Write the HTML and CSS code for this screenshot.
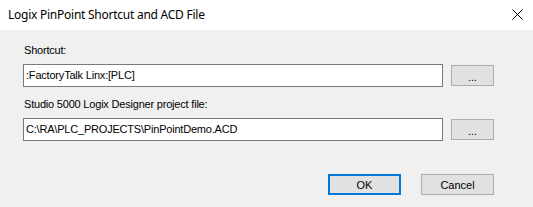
FILE: index.html
```html
<!DOCTYPE html>
<html>
<head>
<meta charset="utf-8">
<link rel="stylesheet" href="styles.css">
</head>
<body>
<div class="dialog">
  <div class="titlebar">
    <span class="title">Logix PinPoint Shortcut and ACD File</span>
    <svg class="close" width="11" height="11" viewBox="0 0 11 11"><path d="M0.5 0.5 L10.5 10.5 M10.5 0.5 L0.5 10.5" stroke="#000" stroke-width="1" fill="none"/></svg>
  </div>
  <div class="content">
    <div class="label first">Shortcut:</div>
    <div class="row">
      <input class="field" type="text" value=":FactoryTalk Linx:[PLC]">
      <button class="btn browse">...</button>
    </div>
    <div class="label second">Studio 5000 Logix Designer project file:</div>
    <div class="row">
      <input class="field" type="text" value="C:\RA\PLC_PROJECTS\PinPointDemo.ACD">
      <button class="btn browse">...</button>
    </div>
    <div class="footer">
      <button class="btn action default">OK</button>
      <button class="btn action">Cancel</button>
    </div>
  </div>
</div>
</body>
</html>
```
FILE: styles.css
```css
html, body {
  margin: 0;
  padding: 0;
  background: #f0f0f0;
}
.dialog {
  width: 533px;
  height: 207px;
  display: flex;
  flex-direction: column;
  font-family: "Liberation Sans", Arial, sans-serif;
  font-size: 11px;
  color: #000;
}
.titlebar {
  height: 30px;
  background: #fff;
  display: flex;
  align-items: center;
  justify-content: space-between;
  padding: 0 10px 0 8px;
  box-sizing: border-box;
}
.title {
  font-family: "Noto Sans", "Open Sans", sans-serif;
  font-size: 12px;
  letter-spacing: -0.25px;
  line-height: 16px;
  margin-top: -1px;
}
.close {
  display: block;
  margin-top: -1px;
}
.content {
  display: flex;
  flex-direction: column;
  padding: 0 39px 0 23px;
}
.label {
  line-height: 13px;
  padding-left: 1px;
  letter-spacing: -0.2px;
}
.label.first { margin-top: 14px; }
.label.second { margin-top: 11px; }
.row {
  display: flex;
  align-items: center;
  gap: 8px;
  margin-top: 7px;
}
.field {
  flex: 1;
  box-sizing: border-box;
  height: 23px;
  margin: 0;
  border: 1px solid #7a7a7a;
  border-radius: 0;
  background: #fff;
  padding: 2px 2px 4px 2px;
  font-family: "Liberation Sans", Arial, sans-serif;
  font-size: 11px;
  letter-spacing: -0.2px;
  color: #000;
  outline: none;
}
.btn {
  box-sizing: border-box;
  height: 21px;
  margin: 0;
  padding: 0;
  border: 1px solid #adadad;
  border-radius: 0;
  background: #e1e1e1;
  font-family: "Liberation Sans", Arial, sans-serif;
  font-size: 11px;
  color: #000;
}
.browse {
  width: 43px;
  padding-top: 3px;
}
.footer {
  display: flex;
  justify-content: flex-end;
  gap: 20px;
  margin-top: 33px;
}
.action {
  width: 73px;
}
.default {
  border: 2px solid #0078d7;
}
```
